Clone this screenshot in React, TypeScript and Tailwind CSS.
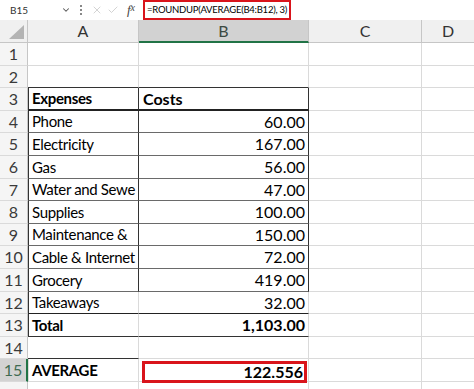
import { ChevronDown, X, Check } from "lucide-react";

type Row = {
  n: number;
  h: string;
  a?: string;
  b?: string;
  bold?: boolean;
  aCls?: string;
  bCls?: string;
};

const GRID = "border-[#dadada]";

// row heights alternate 22/23 to match the ~22.6px pitch
const rows: Row[] = [
  { n: 1, h: "h-[23px]" },
  { n: 2, h: "h-[22px]", aCls: "border-b-[#333]", bCls: "border-b-[#333]" },
  { n: 3, h: "h-[23px]", a: "Expenses", b: "Costs", bold: true, aCls: "border-b-2 border-b-[#222] border-r-[#333]", bCls: "border-b-2 border-b-[#222] border-r-[#333]" },
  { n: 4, h: "h-[22px]", a: "Phone", b: "60.00" },
  { n: 5, h: "h-[23px]", a: "Electricity", b: "167.00" },
  { n: 6, h: "h-[23px]", a: "Gas", b: "56.00" },
  { n: 7, h: "h-[22px]", a: "Water and Sewe", b: "47.00" },
  { n: 8, h: "h-[23px]", a: "Supplies", b: "100.00" },
  { n: 9, h: "h-[22px]", a: "Maintenance &", b: "150.00" },
  { n: 10, h: "h-[23px]", a: "Cable & Internet", b: "72.00" },
  { n: 11, h: "h-[23px]", a: "Grocery", b: "419.00" },
  { n: 12, h: "h-[22px]", a: "Takeaways", b: "32.00", aCls: "border-b-[#222]", bCls: "border-b-[#222]" },
  { n: 13, h: "h-[23px]", a: "Total", b: "1,103.00", bold: true, aCls: "border-b-[#333]", bCls: "border-b-[#333]" },
  { n: 14, h: "h-[22px]", aCls: "border-b-[#333]" },
  { n: 15, h: "h-[23px]", a: "AVERAGE", bold: true },
];

function SheetRow({ row }: { row: Row }) {
  const inTable = row.n >= 3 && row.n <= 13;
  const selected = row.n === 15;
  const aBorder = row.aCls ?? (inTable ? "border-b-[#6a6a6a] border-r-[#333]" : "");
  const bBorder = row.bCls ?? (inTable ? "border-b-[#6a6a6a] border-r-[#333]" : "");
  return (
    <div className={`flex ${row.h}`}>
      <div
        className={`w-[28px] shrink-0 flex items-center justify-center border-b ${GRID} text-[16px] ${
          selected
            ? "bg-[#d3d3d3] text-[#3f6b52] border-r-2 border-r-[#217346]"
            : "bg-[#f5f5f5] text-[#3a3a3a] border-r border-r-[#c6c6c6]"
        }`}
      >
        {row.n}
      </div>
      <div
        className={`w-[111px] shrink-0 flex items-center pl-[3px] border-b border-r ${GRID} ${aBorder} ${
          selected ? "border-[#333] border-l" : ""
        } ${row.bold ? "font-bold" : ""} text-[15px] tracking-[-0.35px] text-black whitespace-nowrap overflow-hidden ${
          inTable ? "border-l border-l-[#333]" : ""
        }`}
      >
        {row.a}
      </div>
      {selected ? (
        <div className="w-[170px] shrink-0 border-b border-r border-[#dadada] relative">
          <div className="absolute left-[3px] right-[1px] top-[2px] bottom-[-2px] border-[3px] border-[#d9141b] flex items-center justify-end pr-[1px] font-bold text-[16px] text-black">
            122.556
          </div>
        </div>
      ) : (
        <div
          className={`w-[170px] shrink-0 flex items-center justify-end pr-[3px] border-b border-r ${GRID} ${bBorder} ${
            row.bold ? "font-bold" : ""
          } text-[16px] text-black ${row.n === 3 ? "justify-start pl-[4px] text-[15px]" : ""}`}
        >
          {row.b}
        </div>
      )}
      <div className={`w-[113px] shrink-0 border-b border-r ${GRID}`} />
      <div className={`flex-1 border-b ${GRID}`} />
    </div>
  );
}

export default function App() {
  return (
    <div className="w-[474px] h-[389px] overflow-hidden bg-white font-['Lato',sans-serif]">
      {/* formula bar */}
      <div className="h-[20px] flex items-center bg-white">
        <div className="w-[74px] h-full flex items-center justify-between pl-[10px] pr-[3px] text-[10px] text-[#333]">
          <span>B15</span>
          <ChevronDown className="w-[10px] h-[10px] text-[#555]" strokeWidth={2.5} />
        </div>
        <div className="w-[14px] flex flex-col items-center gap-[2px]">
          <span className="w-[2px] h-[2px] bg-[#888]" />
          <span className="w-[2px] h-[2px] bg-[#888]" />
          <span className="w-[2px] h-[2px] bg-[#888]" />
        </div>
        <div className="w-[17px] flex justify-center">
          <X className="w-[12px] h-[12px] text-[#c4c4c4]" strokeWidth={1.5} />
        </div>
        <div className="w-[16px] flex justify-center">
          <Check className="w-[12px] h-[12px] text-[#c4c4c4]" strokeWidth={1.5} />
        </div>
        <div className="w-[20px] flex justify-center font-['Liberation_Serif',serif] italic text-[13px] text-[#444]">
          f<span className="text-[10px]">x</span>
        </div>
        <div className="ml-[2px] w-[148px] h-full border-2 border-[#d9141b] flex items-center pl-[2px] text-[9.5px] tracking-[-0.25px] text-black whitespace-nowrap">
          =ROUNDUP(AVERAGE(B4:B12), 3)
        </div>
      </div>

      {/* column headers */}
      <div className="h-[23px] flex bg-[#f0f0f0] text-[16px] text-[#333]">
        <div className="w-[28px] shrink-0 border-r border-b border-[#c6c6c6] relative">
          <div className="absolute right-[3px] bottom-[3px] w-0 h-0 border-l-[15px] border-l-transparent border-b-[14px] border-b-[#b4b4b4]" />
        </div>
        <div className="w-[111px] shrink-0 flex items-center justify-center border-r border-b border-[#c6c6c6]">A</div>
        <div className="w-[170px] shrink-0 flex items-center justify-center bg-[#d2d2d2] border-r border-r-[#c6c6c6] border-b-2 border-b-[#217346] text-[#3c4a42]">
          B
        </div>
        <div className="w-[113px] shrink-0 flex items-center justify-center border-r border-b border-[#c6c6c6]">C</div>
        <div className="flex-1 flex items-center justify-center border-b border-[#c6c6c6]">D</div>
      </div>

      {rows.map((r) => (
        <SheetRow key={r.n} row={r} />
      ))}
      <div className="flex h-[22px]">
        <div className="w-[28px] shrink-0 bg-[#f5f5f5] border-r border-[#c6c6c6]" />
        <div className="w-[111px] shrink-0 border-r border-[#dadada]" />
        <div className="w-[170px] shrink-0 border-r border-[#dadada]" />
        <div className="w-[113px] shrink-0 border-r border-[#dadada]" />
      </div>
    </div>
  );
}
